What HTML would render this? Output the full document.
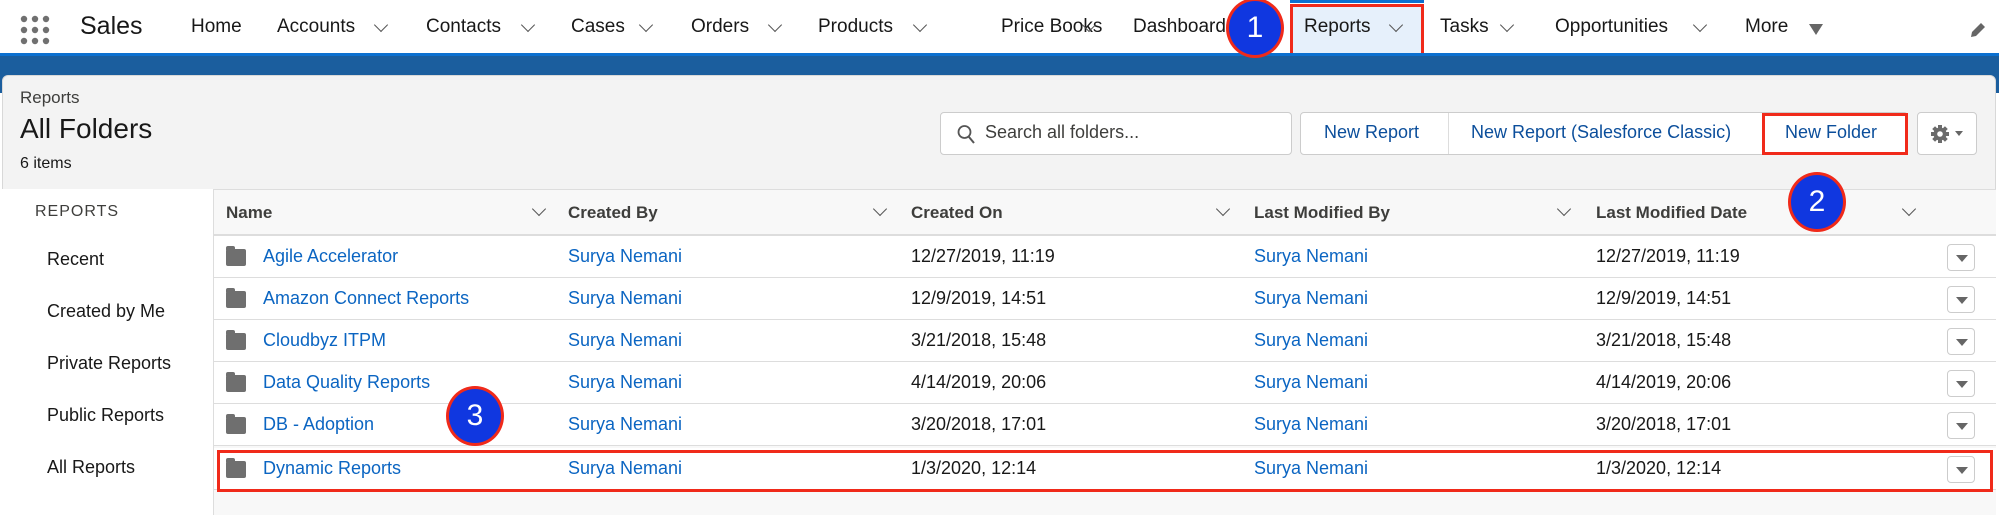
<!DOCTYPE html>
<html><head><meta charset="utf-8"><style>
*{box-sizing:border-box;margin:0;padding:0}
body{width:1999px;height:515px;overflow:hidden;background:#fff;font-family:"Liberation Sans",sans-serif;color:#181818;position:relative}
.a{position:absolute;white-space:nowrap}
.nav{font-size:19px;top:16px}
.chev{position:absolute;width:10px;height:10px;border-right:1.6px solid #555;border-bottom:1.6px solid #555;transform:rotate(45deg)}
.band{position:absolute;left:0;top:53px;width:1999px;height:40px;background:#1b5e9e;border-top:3px solid #0b70d0}
.panel{position:absolute;left:2px;top:75px;width:1994px;height:440px;background:#f3f3f3;border:1px solid #d8d8d8;border-radius:6px 6px 0 0}
.side{position:absolute;left:2px;top:189px;width:212px;height:326px;background:#fff;border-right:1px solid #ddd}
.tbl{position:absolute;left:214px;top:189px;width:1782px;height:326px;background:#f8f8f8}
.row{position:absolute;left:214px;width:1782px;height:42px;background:#fff;border-bottom:1px solid #ddd}
.t{font-size:18px;position:absolute;top:10px;white-space:nowrap}
.lk{color:#0b65c2}
.fold{position:absolute;left:12px;top:13px;width:20px;height:17px;background:#6f6f6f;border-radius:2px}
.fold:before{content:"";position:absolute;left:0;top:-3px;width:9px;height:4px;background:#6f6f6f;border-radius:2px 2px 0 0}
.rb{position:absolute;left:1733px;top:8px;width:28px;height:27px;border:1px solid #ccc;border-radius:4px;background:#fff}
.rb:after{content:"";position:absolute;left:8px;top:10px;border-left:6px solid transparent;border-right:6px solid transparent;border-top:7px solid #666}
.circ{position:absolute;width:58px;height:60px;border-radius:50%;background:#1037e0;border:3px solid #f02a1a;color:#fff;font-size:30px;text-align:center;line-height:54px}
.btn{position:absolute;top:112px;height:43px;background:#fff;border:1px solid #ccc;border-radius:4px}
.bl{font-size:18px;color:#0b4e9b;top:122px}
</style></head><body>
<div class="a" style="left:19px;top:14px;width:32px;height:32px">
<svg width="32" height="32"><g fill="#707070"><circle cx="5" cy="5" r="3.2"/><circle cx="16" cy="5" r="3.2"/><circle cx="27" cy="5" r="3.2"/><circle cx="5" cy="16" r="3.2"/><circle cx="16" cy="16" r="3.2"/><circle cx="27" cy="16" r="3.2"/><circle cx="5" cy="27" r="3.2"/><circle cx="16" cy="27" r="3.2"/><circle cx="27" cy="27" r="3.2"/></g></svg></div>
<div class="a" style="left:80px;top:12px;font-size:25px">Sales</div>
<div class="a nav" style="left:191px">Home</div>
<div class="a nav" style="left:277px">Accounts</div><div class="chev" style="left:376px;top:20px"></div>
<div class="a nav" style="left:426px">Contacts</div><div class="chev" style="left:523px;top:20px"></div>
<div class="a nav" style="left:571px">Cases</div><div class="chev" style="left:641px;top:20px"></div>
<div class="a nav" style="left:691px">Orders</div><div class="chev" style="left:770px;top:20px"></div>
<div class="a nav" style="left:818px">Products</div><div class="chev" style="left:915px;top:20px"></div>
<div class="a nav" style="left:1001px">Price Books</div><div class="chev" style="left:1084px;top:20px"></div>
<div class="a nav" style="left:1133px">Dashboard</div>
<div class="a" style="left:1290px;top:4px;width:134px;height:53px;background:#e6f0fb;border:3px solid #f02a1a"></div>
<div class="a" style="left:1290px;top:0;width:134px;height:3px;background:#0b70d0"></div>
<div class="a nav" style="left:1304px">Reports</div><div class="chev" style="left:1391px;top:20px"></div>
<div class="a nav" style="left:1440px">Tasks</div><div class="chev" style="left:1502px;top:20px"></div>
<div class="a nav" style="left:1555px">Opportunities</div><div class="chev" style="left:1695px;top:20px"></div>
<div class="a nav" style="left:1745px">More</div>
<div class="a" style="left:1809px;top:24px;border-left:7px solid transparent;border-right:7px solid transparent;border-top:11px solid #666"></div>
<svg class="a" style="left:1968px;top:20px" width="20" height="20"><path d="M3 17 L4 12 L13 3 L17 7 L8 16 Z" fill="#666"/></svg>
<div class="band"></div>
<div class="panel"></div>
<div class="a" style="left:20px;top:88px;font-size:17px;color:#3e3e3c">Reports</div>
<div class="a" style="left:20px;top:113px;font-size:28px">All Folders</div>
<div class="a" style="left:20px;top:155px;font-size:16px">6 items</div>
<div class="btn" style="left:940px;width:352px"></div>
<svg class="a" style="left:957px;top:124px" width="18" height="20"><circle cx="7.5" cy="8" r="6" fill="none" stroke="#555" stroke-width="1.8"/><path d="M12 13 L17 19" stroke="#555" stroke-width="2"/></svg>
<div class="a" style="left:985px;top:122px;font-size:18px;color:#3e3e3c">Search all folders...</div>
<div class="btn" style="left:1300px;width:608px"></div>
<div class="a" style="left:1448px;top:113px;width:1px;height:41px;background:#ddd"></div>
<div class="a bl" style="left:1324px">New Report</div>
<div class="a bl" style="left:1471px">New Report (Salesforce Classic)</div>
<div class="a" style="left:1762px;top:113px;width:146px;height:42px;border:3px solid #f02a1a"></div>
<div class="a bl" style="left:1785px">New Folder</div>
<div class="btn" style="left:1917px;width:60px"></div>
<svg class="a" style="left:1930px;top:124px" width="20" height="20"><g fill="#6b6b6b"><circle cx="10" cy="10" r="6.5"/><rect x="8" y="1" width="4" height="18"/><rect x="1" y="8" width="18" height="4"/><rect x="8" y="1" width="4" height="18" transform="rotate(45 10 10)"/><rect x="8" y="1" width="4" height="18" transform="rotate(-45 10 10)"/></g><circle cx="10" cy="10" r="2.8" fill="#fff"/></svg>
<div class="a" style="left:1955px;top:131px;border-left:4px solid transparent;border-right:4px solid transparent;border-top:5px solid #666"></div>
<div class="side"></div>
<div class="tbl"></div>
<div class="a" style="left:35px;top:203px;font-size:16px;letter-spacing:1px;color:#3e3e3c">REPORTS</div>
<div class="a" style="left:47px;top:249px;font-size:18px">Recent</div>
<div class="a" style="left:47px;top:301px;font-size:18px">Created by Me</div>
<div class="a" style="left:47px;top:353px;font-size:18px">Private Reports</div>
<div class="a" style="left:47px;top:405px;font-size:18px">Public Reports</div>
<div class="a" style="left:47px;top:457px;font-size:18px">All Reports</div>
<div class="a" style="left:214px;top:189px;width:1782px;height:47px;background:#f8f8f8;border-bottom:2px solid #ddd;border-top:1px solid #ddd"></div>
<div class="a" style="left:226px;top:203px;font-size:17px;font-weight:bold;color:#3e3e3c">Name</div><div class="chev" style="left:534px;top:204px"></div>
<div class="a" style="left:568px;top:203px;font-size:17px;font-weight:bold;color:#3e3e3c">Created By</div><div class="chev" style="left:875px;top:204px"></div>
<div class="a" style="left:911px;top:203px;font-size:17px;font-weight:bold;color:#3e3e3c">Created On</div><div class="chev" style="left:1218px;top:204px"></div>
<div class="a" style="left:1254px;top:203px;font-size:17px;font-weight:bold;color:#3e3e3c">Last Modified By</div><div class="chev" style="left:1559px;top:204px"></div>
<div class="a" style="left:1596px;top:203px;font-size:17px;font-weight:bold;color:#3e3e3c">Last Modified Date</div><div class="chev" style="left:1904px;top:204px"></div>

<div class="row" style="top:236px"><div class="fold"></div><div class="t lk" style="left:49px">Agile Accelerator</div><div class="t lk" style="left:354px">Surya Nemani</div><div class="t" style="left:697px">12/27/2019, 11:19</div><div class="t lk" style="left:1040px">Surya Nemani</div><div class="t" style="left:1382px">12/27/2019, 11:19</div><div class="rb"></div></div>
<div class="row" style="top:278px"><div class="fold"></div><div class="t lk" style="left:49px">Amazon Connect Reports</div><div class="t lk" style="left:354px">Surya Nemani</div><div class="t" style="left:697px">12/9/2019, 14:51</div><div class="t lk" style="left:1040px">Surya Nemani</div><div class="t" style="left:1382px">12/9/2019, 14:51</div><div class="rb"></div></div>
<div class="row" style="top:320px"><div class="fold"></div><div class="t lk" style="left:49px">Cloudbyz ITPM</div><div class="t lk" style="left:354px">Surya Nemani</div><div class="t" style="left:697px">3/21/2018, 15:48</div><div class="t lk" style="left:1040px">Surya Nemani</div><div class="t" style="left:1382px">3/21/2018, 15:48</div><div class="rb"></div></div>
<div class="row" style="top:362px"><div class="fold"></div><div class="t lk" style="left:49px">Data Quality Reports</div><div class="t lk" style="left:354px">Surya Nemani</div><div class="t" style="left:697px">4/14/2019, 20:06</div><div class="t lk" style="left:1040px">Surya Nemani</div><div class="t" style="left:1382px">4/14/2019, 20:06</div><div class="rb"></div></div>
<div class="row" style="top:404px"><div class="fold"></div><div class="t lk" style="left:49px">DB - Adoption</div><div class="t lk" style="left:354px">Surya Nemani</div><div class="t" style="left:697px">3/20/2018, 17:01</div><div class="t lk" style="left:1040px">Surya Nemani</div><div class="t" style="left:1382px">3/20/2018, 17:01</div><div class="rb"></div></div>
<div class="row" style="top:448px"><div class="fold"></div><div class="t lk" style="left:49px">Dynamic Reports</div><div class="t lk" style="left:354px">Surya Nemani</div><div class="t" style="left:697px">1/3/2020, 12:14</div><div class="t lk" style="left:1040px">Surya Nemani</div><div class="t" style="left:1382px">1/3/2020, 12:14</div><div class="rb"></div></div>
<div class="a" style="left:217px;top:450px;width:1776px;height:42px;border:3px solid #f02a1a"></div>

<div class="circ" style="left:1226px;top:-2px">1</div>
<div class="circ" style="left:1788px;top:172px">2</div>
<div class="circ" style="left:446px;top:386px">3</div>
</body></html>
